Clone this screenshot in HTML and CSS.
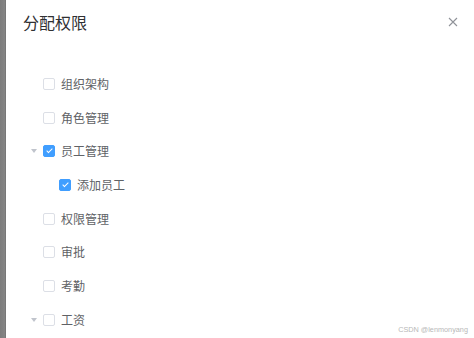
FILE: index.html
```html
<!DOCTYPE html>
<html lang="zh-CN">
<head>
    <meta charset="UTF-8">
    <meta name="viewport" content="width=device-width, initial-scale=1.0">
    <title>分配权限</title>
    <link rel="stylesheet" href="styles.css">
</head>
<body>
    <div class="page">
        <div class="side-strip"></div>
        <div class="dialog">
            <div class="dialog-header">
                <span class="dialog-title">分配权限</span>
                <svg class="close-icon" width="10" height="10" viewBox="0 0 10 10">
                    <path d="M1 1 L9 9 M9 1 L1 9" stroke="#909399" stroke-width="1.1" fill="none"/>
                </svg>
            </div>
            <div class="tree">
                <div class="tree-node"><span class="arrow"></span><span class="checkbox"></span><span class="label">组织架构</span></div>
                <div class="tree-node"><span class="arrow"></span><span class="checkbox"></span><span class="label">角色管理</span></div>
                <div class="tree-node"><span class="arrow open"></span><span class="checkbox checked"></span><span class="label">员工管理</span></div>
                <div class="tree-node child"><span class="arrow"></span><span class="checkbox checked"></span><span class="label">添加员工</span></div>
                <div class="tree-node"><span class="arrow"></span><span class="checkbox"></span><span class="label">权限管理</span></div>
                <div class="tree-node"><span class="arrow"></span><span class="checkbox"></span><span class="label">审批</span></div>
                <div class="tree-node"><span class="arrow"></span><span class="checkbox"></span><span class="label">考勤</span></div>
                <div class="tree-node"><span class="arrow open"></span><span class="checkbox"></span><span class="label">工资</span></div>
            </div>
        </div>
    </div>
    <div class="watermark">CSDN @lenmonyang</div>
</body>
</html>
```

FILE: styles.css
```css
body {
    margin: 0;
    padding: 0;
    font-family: "Noto Sans CJK SC", "Noto Sans", sans-serif;
    background: #fff;
    overflow: hidden;
}

.page {
    display: flex;
    height: 338px;
}

.side-strip {
    width: 6px;
    flex-shrink: 0;
    background: linear-gradient(to right, #7c7c7c, #858585 80%, #6f6f6f);
}

.dialog {
    flex: 1;
    background: #fff;
}

.dialog-header {
    display: flex;
    justify-content: space-between;
    align-items: center;
    padding: 12px 16px 0 17px;
    height: 20px;
}

.dialog-title {
    font-size: 16px;
    line-height: 20px;
    color: #303133;
}

.close-icon {
    display: block;
}

.tree {
    margin-top: 35px;
}

.tree-node {
    display: flex;
    align-items: center;
    height: 33.7px;
    padding-left: 21px;
    font-size: 12px;
    color: #606266;
}

.tree-node.child {
    padding-left: 37px;
}

.arrow {
    width: 13px;
    height: 12px;
    margin-right: 3px;
    position: relative;
}

.arrow.open::after {
    content: "";
    position: absolute;
    left: 4px;
    top: 4px;
    border-left: 3px solid transparent;
    border-right: 3px solid transparent;
    border-top: 4px solid #c0c4cc;
}

.checkbox {
    width: 10px;
    height: 10px;
    border: 1px solid #dcdfe6;
    border-radius: 2px;
    background: #fff;
    margin-right: 6px;
    position: relative;
}

.checkbox.checked {
    background: #409eff;
    border-color: #409eff;
}

.checkbox.checked::after {
    content: "";
    position: absolute;
    left: 3.5px;
    top: 1px;
    width: 2px;
    height: 5px;
    border: 1px solid #fff;
    border-left: 0;
    border-top: 0;
    transform: rotate(45deg);
}

.label {
    line-height: 16px;
}

.watermark {
    position: absolute;
    right: 6px;
    bottom: 4px;
    font-family: "Liberation Sans", sans-serif;
    font-size: 7.3px;
    color: #b8b8b8;
}
```
